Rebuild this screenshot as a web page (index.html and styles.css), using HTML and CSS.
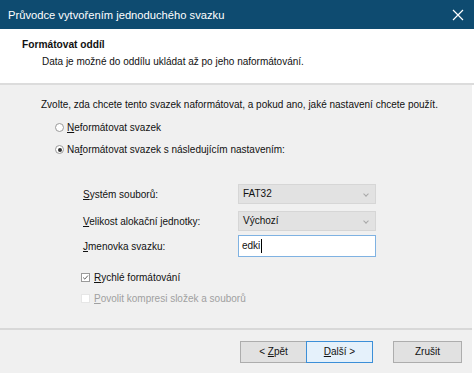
FILE: index.html
```html
<!DOCTYPE html>
<html>

<head>
  <meta charset="utf-8">
  <title>Průvodce vytvořením jednoduchého svazku</title>
  <link rel="stylesheet" href="styles.css">
</head>

<body>
	<div class="window">
		<div class="titlebar">
			<span class="caption">Průvodce vytvořením jednoduchého svazku</span>
			<svg class="close" width="12" height="12" viewBox="0 0 12 12">
				<path d="M1 1 L11 11 M11 1 L1 11" stroke="#ffffff" stroke-width="1.2" fill="none"/>
			</svg>
		</div>

		<div class="header">
			<div class="head-title">Formátovat oddíl</div>
			<div class="head-sub">Data je možné do oddílu ukládat až po jeho naformátování.</div>
		</div>

		<div class="content">
			<p class="intro">Zvolte, zda chcete tento svazek naformátovat, a pokud ano, jaké nastavení chcete použít.</p>

			<div class="option">
				<span class="radio"></span>
				<span><u>N</u>eformátovat svazek</span>
			</div>
			<div class="option second">
				<span class="radio checked"></span>
				<span>Na<u>f</u>ormátovat svazek s následujícím nastavením:</span>
			</div>

			<div class="settings">
				<span class="label"><u>S</u>ystém souborů:</span>
				<div class="combo">FAT32<span class="arrow"></span></div>

				<span class="label"><u>V</u>elikost alokační jednotky:</span>
				<div class="combo">Výchozí<span class="arrow"></span></div>

				<span class="label name"><u>J</u>menovka svazku:</span>
				<div class="field">edki<span class="caret"></span></div>
			</div>

			<div class="check">
				<span class="box ticked">
					<svg width="9" height="9" viewBox="0 0 9 9">
						<path d="M1.5 4.5 L3.6 6.6 L7.6 2" stroke="#333333" stroke-width="1" fill="none"/>
					</svg>
				</span>
				<span><u>R</u>ychlé formátování</span>
			</div>
			<div class="check disabled">
				<span class="box"></span>
				<span><u>P</u>ovolit kompresi složek a souborů</span>
			</div>
		</div>

		<div class="footer">
			<div class="btn">&lt; <u>Z</u>pět</div>
			<div class="btn default"><u>D</u>alší &gt;</div>
			<div class="btn cancel">Zrušit</div>
		</div>
	</div>
</body>

</html>
```

FILE: styles.css
```css
body {
	margin: 0;
	background: #ffffff;
	font-family: "Liberation Sans", Arial, sans-serif;
	font-size: 10px;
	color: #111111;
}

.window {
	width: 472px;
	height: 373px;
	background: #f0f0f0;
	display: flex;
	flex-direction: column;
}

.titlebar {
	width: 474px;
	height: 29px;
	background: #0e4b70;
	color: #ffffff;
	display: flex;
	align-items: center;
	justify-content: space-between;
	box-sizing: border-box;
	padding: 0 10px 0 8px;
	font-size: 11.2px;
}

.close {
	margin-top: 1px;
}

.header {
	width: 474px;
	height: 56px;
	background: #ffffff;
	box-sizing: border-box;
	padding-top: 8px;
	border-bottom: 2px solid #dcdcdc;
}

.head-title {
	font-weight: bold;
	font-size: 10.2px;
	padding-left: 22px;
	line-height: 15px;
}

.head-sub {
	padding-left: 42px;
	line-height: 15px;
	margin-top: 2px;
}

.content {
	padding: 12px 0 0 41px;
	height: 245px;
	box-sizing: border-box;
	border-bottom: 2px solid #d8d8d8;
}

.intro {
	margin: 0;
	line-height: 15px;
}

.option {
	display: flex;
	align-items: center;
	gap: 3px;
	margin: 8px 0 0 14px;
	line-height: 15px;
}

.option.second {
	margin-top: 7px;
}

.radio {
	width: 7px;
	height: 7px;
	border: 1px solid #9a9a9a;
	border-radius: 50%;
	background: #ffffff;
	position: relative;
}

.radio.checked::after {
	content: "";
	position: absolute;
	left: 1.5px;
	top: 1.5px;
	width: 4px;
	height: 4px;
	border-radius: 50%;
	background: #333333;
}

.settings {
	display: grid;
	grid-template-columns: 155px 138px;
	align-items: center;
	row-gap: 7px;
	margin: 27px 0 0 42px;
}

.settings .name {
	margin-top: -3px;
}

.combo {
	height: 20px;
	box-sizing: border-box;
	background: #e2e2e2;
	border: 1px solid #d6d6d6;
	padding-left: 4px;
	line-height: 18px;
	position: relative;
}

.arrow {
	position: absolute;
	right: 7px;
	top: 7px;
	width: 3px;
	height: 3px;
	border-right: 1px solid #a8a8a8;
	border-bottom: 1px solid #a8a8a8;
	transform: rotate(45deg);
}

.field {
	height: 22px;
	box-sizing: border-box;
	background: #ffffff;
	border: 1px solid #7fb2e2;
	padding-left: 3px;
	line-height: 20px;
	margin-top: -3px;
	display: flex;
	align-items: center;
}

.caret {
	width: 1px;
	height: 14px;
	background: #000000;
	margin-left: 1px;
}

.check {
	display: flex;
	align-items: center;
	gap: 4px;
	margin: 13px 0 0 40px;
	line-height: 15px;
}

.check + .check {
	margin-top: 6px;
}

.box {
	width: 7px;
	height: 7px;
	border: 1px solid #9a9a9a;
	background: #ffffff;
	display: flex;
	align-items: center;
	justify-content: center;
}

.box svg {
	width: 7px;
	height: 7px;
}

.check.disabled {
	color: #a0a0a0;
}

.check.disabled .box {
	border-color: #e6e6e6;
}

.footer {
	display: flex;
	padding: 11px 0 0 240px;
}

.btn {
	width: 67px;
	height: 22px;
	box-sizing: border-box;
	background: #e1e1e1;
	border: 1px solid #adadad;
	text-align: center;
	line-height: 20px;
}

.btn.default {
	background: #e5f1fb;
	border-color: #3c8fd8;
	margin-left: -1px;
}

.btn.cancel {
	margin-left: 20px;
	width: 69px;
}
```
